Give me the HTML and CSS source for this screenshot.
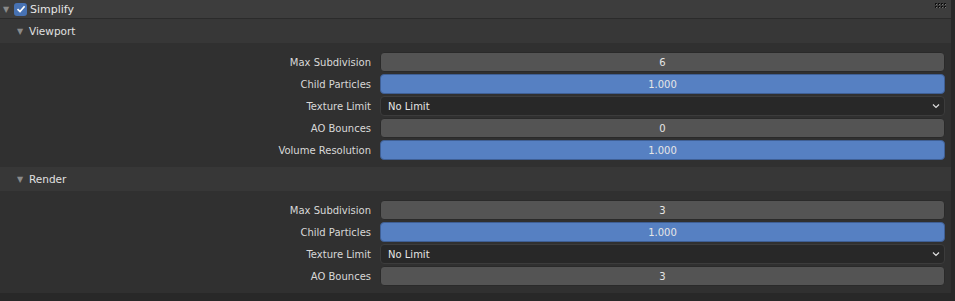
FILE: index.html
```html
<!DOCTYPE html>
<html lang="en">
<head>
  <meta charset="UTF-8" />
  <title>Simplify</title>
  <link rel="stylesheet" href="styles.css">
</head>
<body>
  <div class="editor">
    <div class="panel">
      <!-- Panel header -->
      <div class="panel-header">
        <span class="arrow">&#9660;</span>
        <span class="checkbox">
          <svg width="10" height="10" viewBox="0 0 10 10"><path d="M1.5 5.2 L4 7.6 L8.6 2.2" fill="none" stroke="#fff" stroke-width="1.7"/></svg>
        </span>
        <span class="panel-title">Simplify</span>
        <span class="grip">
          <svg width="12" height="6" viewBox="0 0 12 6">
            <g fill="#111">
              <rect x="0" y="0" width="2" height="2"/><rect x="3" y="0" width="2" height="2"/><rect x="6" y="0" width="2" height="2"/><rect x="9" y="0" width="2" height="2"/>
              <rect x="0" y="3" width="2" height="2"/><rect x="3" y="3" width="2" height="2"/><rect x="6" y="3" width="2" height="2"/><rect x="9" y="3" width="2" height="2"/>
            </g>
            <g fill="#777">
              <rect x="1" y="1" width="1" height="1"/><rect x="4" y="1" width="1" height="1"/><rect x="7" y="1" width="1" height="1"/><rect x="10" y="1" width="1" height="1"/>
              <rect x="1" y="4" width="1" height="1"/><rect x="4" y="4" width="1" height="1"/><rect x="7" y="4" width="1" height="1"/><rect x="10" y="4" width="1" height="1"/>
            </g>
          </svg>
        </span>
      </div>

      <!-- Viewport -->
      <div class="sub-header">
        <span class="arrow small">&#9660;</span>
        <span>Viewport</span>
      </div>
      <div class="sub-body">
        <div class="row">
          <label>Max Subdivision</label>
          <div class="field num">6</div>
        </div>
        <div class="row">
          <label>Child Particles</label>
          <div class="field slider">1.000</div>
        </div>
        <div class="row">
          <label>Texture Limit</label>
          <div class="field menu">No Limit <span class="chevron"><svg width="8" height="6" viewBox="0 0 8 6"><path d="M1 1.5 L4 4.5 L7 1.5" fill="none" stroke="#ddd" stroke-width="1.2"/></svg></span></div>
        </div>
        <div class="row">
          <label>AO Bounces</label>
          <div class="field num">0</div>
        </div>
        <div class="row">
          <label>Volume Resolution</label>
          <div class="field slider">1.000</div>
        </div>
      </div>

      <!-- Render -->
      <div class="sub-header render">
        <span class="arrow small">&#9660;</span>
        <span>Render</span>
      </div>
      <div class="sub-body">
        <div class="row">
          <label>Max Subdivision</label>
          <div class="field num">3</div>
        </div>
        <div class="row">
          <label>Child Particles</label>
          <div class="field slider">1.000</div>
        </div>
        <div class="row">
          <label>Texture Limit</label>
          <div class="field menu">No Limit <span class="chevron"><svg width="8" height="6" viewBox="0 0 8 6"><path d="M1 1.5 L4 4.5 L7 1.5" fill="none" stroke="#ddd" stroke-width="1.2"/></svg></span></div>
        </div>
        <div class="row">
          <label>AO Bounces</label>
          <div class="field num">3</div>
        </div>
      </div>
    </div>
  </div>
</body>
</html>
```

FILE: styles.css
```css
* {
  margin: 0;
  padding: 0;
  box-sizing: border-box;
  font-family: 'DejaVu Sans', sans-serif;
}
body {
  width: 955px;
  height: 301px;
  background: #282828;
  overflow: hidden;
}
.editor {
  width: 951px;
  height: 293px;
  background: #303030;
}
.panel-header {
  height: 19px;
  display: flex;
  align-items: center;
  background: #3d3d3d;
  color: #e6e6e6;
  font-size: 11px;
  border-bottom: 1px solid #2b2b2b;
}
.arrow {
  color: #8a8a8a;
  font-size: 8px;
  width: 14px;
  padding-left: 3px;
}
.checkbox {
  width: 13px;
  height: 13px;
  border-radius: 3px;
  background: #4772b3;
  display: flex;
  align-items: center;
  justify-content: center;
  margin-right: 3px;
}
.panel-title {
  flex: 1;
}
.grip {
  display: flex;
  margin-right: 4px;
  margin-top: -6px;
}
.sub-header {
  height: 24px;
  display: flex;
  align-items: center;
  background: #373737;
  color: #e0e0e0;
  font-size: 10.5px;
  padding-left: 17px;
}
.sub-header .arrow {
  padding-left: 0;
  width: 12px;
}
.sub-header.render {
  margin-top: 7px;
}
.sub-body {
  padding: 9px 6px 0 0;
  display: flex;
  flex-direction: column;
  gap: 2px;
}
.row {
  display: grid;
  grid-template-columns: 371px 1fr;
  column-gap: 9px;
  height: 20px;
  align-items: center;
}
.row label {
  text-align: right;
  color: #d8d8d8;
  font-size: 10px;
}
.field {
  height: 20px;
  border-radius: 4px;
  font-size: 10px;
  color: #e6e6e6;
  display: flex;
  align-items: center;
  justify-content: center;
  border: 1px solid #2a2a2a;
}
.field.num {
  background: #545454;
}
.field.slider {
  background: #5680c2;
  border-color: #3f5f94;
}
.field.menu {
  background: #282828;
  border-color: #3c3c3c;
  justify-content: space-between;
  padding: 0 4px 0 7px;
}
.chevron {
  display: flex;
}
```
